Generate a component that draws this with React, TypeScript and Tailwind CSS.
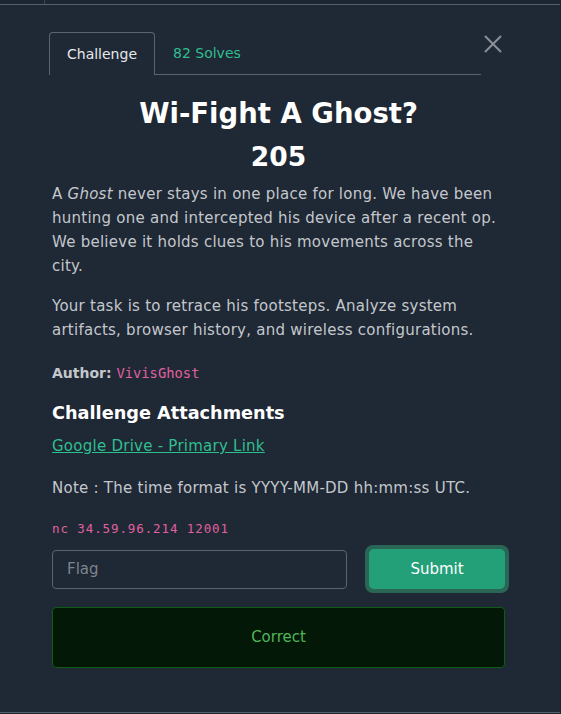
import React from "react";

export default function App() {
  const font = { fontFamily: '"DejaVu Sans", "Noto Sans", sans-serif' };
  const mono = { fontFamily: '"DejaVu Sans Mono", monospace' };
  return (
    <div className="w-[561px] h-[714px] bg-[#1c2530] overflow-hidden relative" style={font}>
      <div className="absolute left-[44px] top-0 w-px h-[4px] bg-[#3a4552]" />
      <div className="mt-[4px] ml-[-20px] w-[580px] h-[709px] bg-[#1f2835] border border-[#56606c] border-r-0">
        <div className="w-[561px] ml-[20px] h-full border-r border-[#56606c] relative">
          <button className="absolute left-[481px] top-[28px] w-[22px] h-[22px] flex items-center justify-center text-[#8a9099]">
            <svg width="18" height="18" viewBox="0 0 18 18" fill="none" stroke="currentColor" strokeWidth="2">
              <path d="M1 1L17 17M17 1L1 17" />
            </svg>
          </button>
          <div className="pl-[51px] pr-[56px] pt-[27px]">
            <div className="flex w-[432px] ml-[-3px] border-b border-[#5a636e] h-[43px]">
              <div className="w-[106px] h-[43px] border border-b-0 border-[#5a636e] rounded-t-[4px] flex items-center justify-center text-[14px] text-[#e6e8ea] mb-[-1px] bg-[#1f2835]">
                Challenge
              </div>
              <div className="px-[18px] flex items-center text-[14px] text-[#2fbf8f]">82 Solves</div>
            </div>
            <h1 className="text-center text-[27.5px] font-bold text-white mt-[20px] leading-[36px]">Wi-Fight A Ghost?</h1>
            <h2 className="text-center text-[26.5px] font-bold text-white mt-[10px] leading-[32px]">205</h2>
            <div className="mt-[9px] text-[15px] leading-[24px] text-[#c3c7cc] tracking-[0.25px]">
              <p>A <em>Ghost</em> never stays in one place for long. We have been hunting one and intercepted his device after a recent op. We believe it holds clues to his movements across the city.</p>
              <p className="mt-[16px]">Your task is to retrace his footsteps. Analyze system artifacts, browser history, and wireless configurations.</p>
              <p className="mt-[19px] tracking-normal"><span className="font-bold text-[14px]">Author:</span> <span className="text-[#e060a0] text-[13.8px]" style={mono}>VivisGhost</span></p>
            </div>
            <h3 className="mt-[14px] text-[17.7px] font-bold text-white leading-[28px]">Challenge Attachments</h3>
            <a className="block mt-[7px] text-[15px] leading-[24px] text-[#2fbf8f] underline tracking-[0.25px]">Google Drive - Primary Link</a>
            <p className="mt-[18px] text-[15px] leading-[24px] text-[#c3c7cc] tracking-[0.25px]">Note : The time format is YYYY-MM-DD hh:mm:ss UTC.</p>
            <p className="mt-[20px] text-[12.5px] leading-[18px] text-[#e060a0] tracking-[0.9px]" style={mono}>nc 34.59.96.214 12001</p>
            <div className="flex items-center mt-[7px] gap-[18px]">
              <div className="shrink-0 w-[295px] h-[39px] border border-[#5a636e] rounded-[4px] flex items-center px-[14px] text-[15px] text-[#7d848d]">Flag</div>
              <div className="shrink-0 w-[144px] h-[48px] rounded-[8px] bg-[#2a6655] p-[4px]">
                <div className="w-full h-full rounded-[5px] bg-[#24a079] flex items-center justify-center text-[15px] text-white font-medium">Submit</div>
              </div>
            </div>
            <div className="mt-[14px] w-[453px] h-[61px] rounded-[4px] bg-[#031807] border border-[#0f5a17] flex items-center justify-center text-[15px] text-[#52b55a]">Correct</div>
          </div>
        </div>
      </div>
    </div>
  );
}
